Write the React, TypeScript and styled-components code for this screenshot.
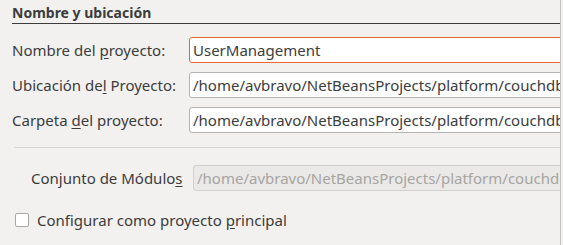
import React from 'react';
import styled, { createGlobalStyle } from 'styled-components';

const Global = createGlobalStyle`
    html, body {
        margin: 0;
        padding: 0;
        background: #f2f1f0;
    }
    body {
        font-family: "Noto Sans", "DejaVu Sans", sans-serif;
        color: #3c3c3c;
    }
`;

const Panel = styled.div`
    width: 561px;
    height: 245px;
    border-right: 1px solid #c4c2bf;
    overflow: hidden;
    box-sizing: border-box;
    padding: 3px 0 0 12px;
`;

const SectionTitle = styled.div`
    font-size: 14px;
    font-weight: 700;
    line-height: 20px;
    border-bottom: 1px solid #3c3c3c;
`;

const Form = styled.div`
    display: grid;
    grid-template-columns: 177px 1fr;
    row-gap: 9px;
    margin-top: 13px;
    align-items: center;
`;

const Label = styled.label`
    font-size: 15px;
    white-space: nowrap;
`;

const Key = styled.span`
    text-decoration: underline;
    text-underline-offset: 2px;
`;

const Field = styled.div<{ $focused?: boolean; $disabled?: boolean }>`
    flex: none;
    height: 26px;
    box-sizing: border-box;
    width: 420px;
    padding: 0 3px;
    display: flex;
    align-items: center;
    border: 1px solid ${(p) => (p.$focused ? '#e9692c' : p.$disabled ? '#d2d0cd' : '#b6b4b1')};
    border-radius: 3px;
    background: ${(p) => (p.$disabled ? '#eae9e7' : '#ffffff')};
    color: ${(p) => (p.$disabled ? '#a7a5a2' : '#3c3c3c')};
    font-size: 15px;
    white-space: nowrap;
    overflow: hidden;
`;

const Divider = styled.div`
    height: 1px;
    background: #d9d7d4;
    margin: 14px 0 0 2px;
`;

const ModuleRow = styled.div`
    display: flex;
    align-items: center;
    margin-top: 17px;
    padding-left: 19px;
`;

const ModuleLabel = styled(Label)`
    flex: none;
    width: 162px;
`;

const CheckRow = styled.label`
    display: flex;
    align-items: center;
    gap: 8px;
    margin-top: 19px;
    padding-left: 3px;
    font-size: 15px;
`;

const Box = styled.span`
    width: 14px;
    height: 14px;
    box-sizing: border-box;
    border: 1px solid #a9a7a4;
    border-radius: 2px;
    background: #ffffff;
`;

export default function App() {
    return (
        <>
            <Global />
            <Panel>
                <SectionTitle>Nombre y ubicación</SectionTitle>
                <Form>
                    <Label>Nombre del <Key>p</Key>royecto:</Label>
                    <Field $focused>UserManagement</Field>
                    <Label>Ubicación de<Key>l</Key> Proyecto:</Label>
                    <Field>/home/avbravo/NetBeansProjects/platform/couchdb</Field>
                    <Label>Carpeta <Key>d</Key>el proyecto:</Label>
                    <Field>/home/avbravo/NetBeansProjects/platform/couchdb</Field>
                </Form>
                <Divider />
                <ModuleRow>
                    <ModuleLabel>Conjunto de Módulo<Key>s</Key></ModuleLabel>
                    <Field $disabled>/home/avbravo/NetBeansProjects/platform/couchdb</Field>
                </ModuleRow>
                <CheckRow>
                    <Box />
                    <span>Configurar como proyecto <Key>p</Key>rincipal</span>
                </CheckRow>
            </Panel>
        </>
    );
}
